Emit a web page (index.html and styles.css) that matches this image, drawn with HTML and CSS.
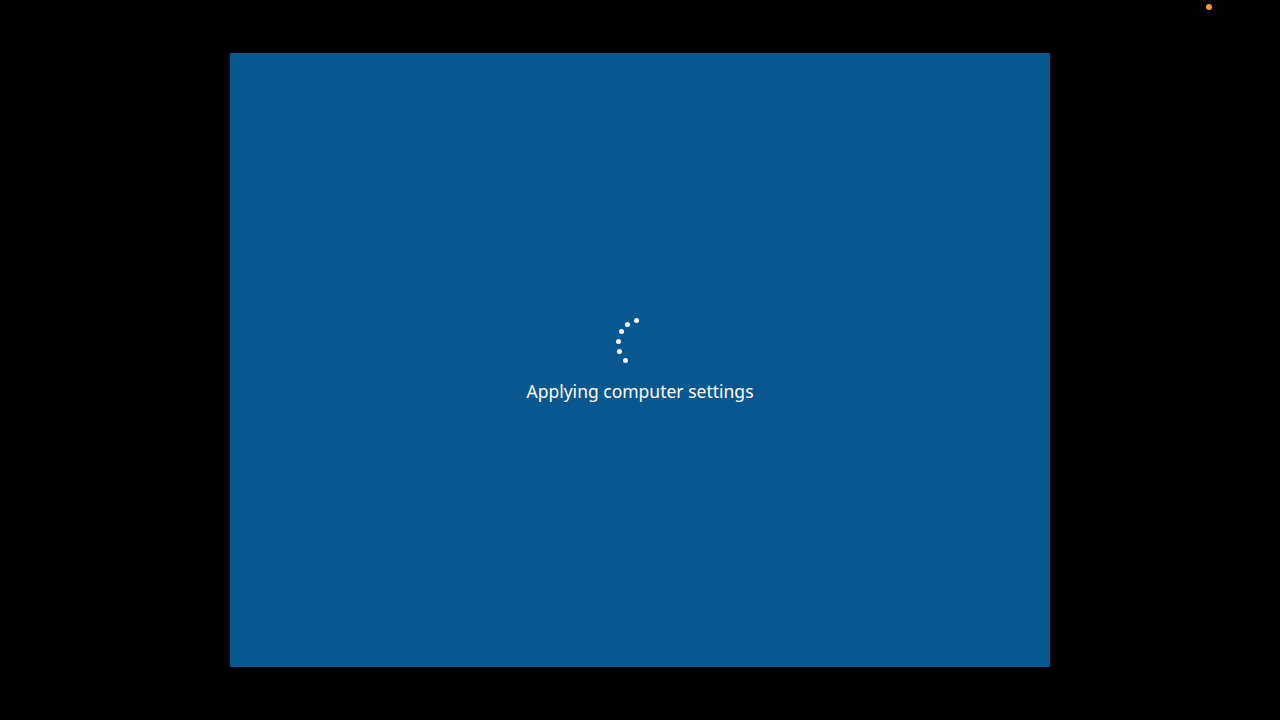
FILE: index.html
```html
<!DOCTYPE html>
<html>
<head>
<meta charset="utf-8">
<link rel="stylesheet" href="styles.css">
</head>
<body>
<div class="screen">
  <span class="indicator"></span>
  <main class="panel">
    <div class="spinner">
      <span class="dot d1"></span>
      <span class="dot d2"></span>
      <span class="dot d3"></span>
      <span class="dot d4"></span>
      <span class="dot d5"></span>
      <span class="dot d6"></span>
    </div>
    <p class="status">Applying computer settings</p>
  </main>
</div>
</body>
</html>
```
FILE: styles.css
```css
html, body {
  margin: 0;
  padding: 0;
  background: #000;
}
.screen {
  position: relative;
  width: 1280px;
  height: 720px;
  padding-top: 53px;
  padding-left: 230px;
  box-sizing: border-box;
}
.indicator {
  position: absolute;
  left: 1206px;
  top: 4px;
  width: 6px;
  height: 6px;
  border-radius: 50%;
  background: #f39a33;
}
.panel {
  width: 820px;
  height: 614px;
  background: #08578f;
  display: flex;
  flex-direction: column;
  align-items: center;
  box-sizing: border-box;
  padding-top: 263px;
}
.spinner {
  position: relative;
  width: 48px;
  height: 48px;
  flex: none;
}
.dot {
  position: absolute;
  width: 5px;
  height: 5px;
  border-radius: 50%;
  background: #ffffff;
}
.d1 { left: 17.5px; top: 1.5px; }
.d2 { left: 8.5px; top: 5.5px; }
.d3 { left: 2.5px; top: 12.5px; }
.d4 { left: -0.5px; top: 22.5px; }
.d5 { left: 0.5px; top: 32.5px; }
.d6 { left: 6.5px; top: 41.5px; }
.status {
  margin: 14px 0 0 0;
  font-family: "Noto Sans", "Open Sans", sans-serif;
  font-size: 17.5px;
  line-height: 26px;
  color: #ffffff;
}
```
